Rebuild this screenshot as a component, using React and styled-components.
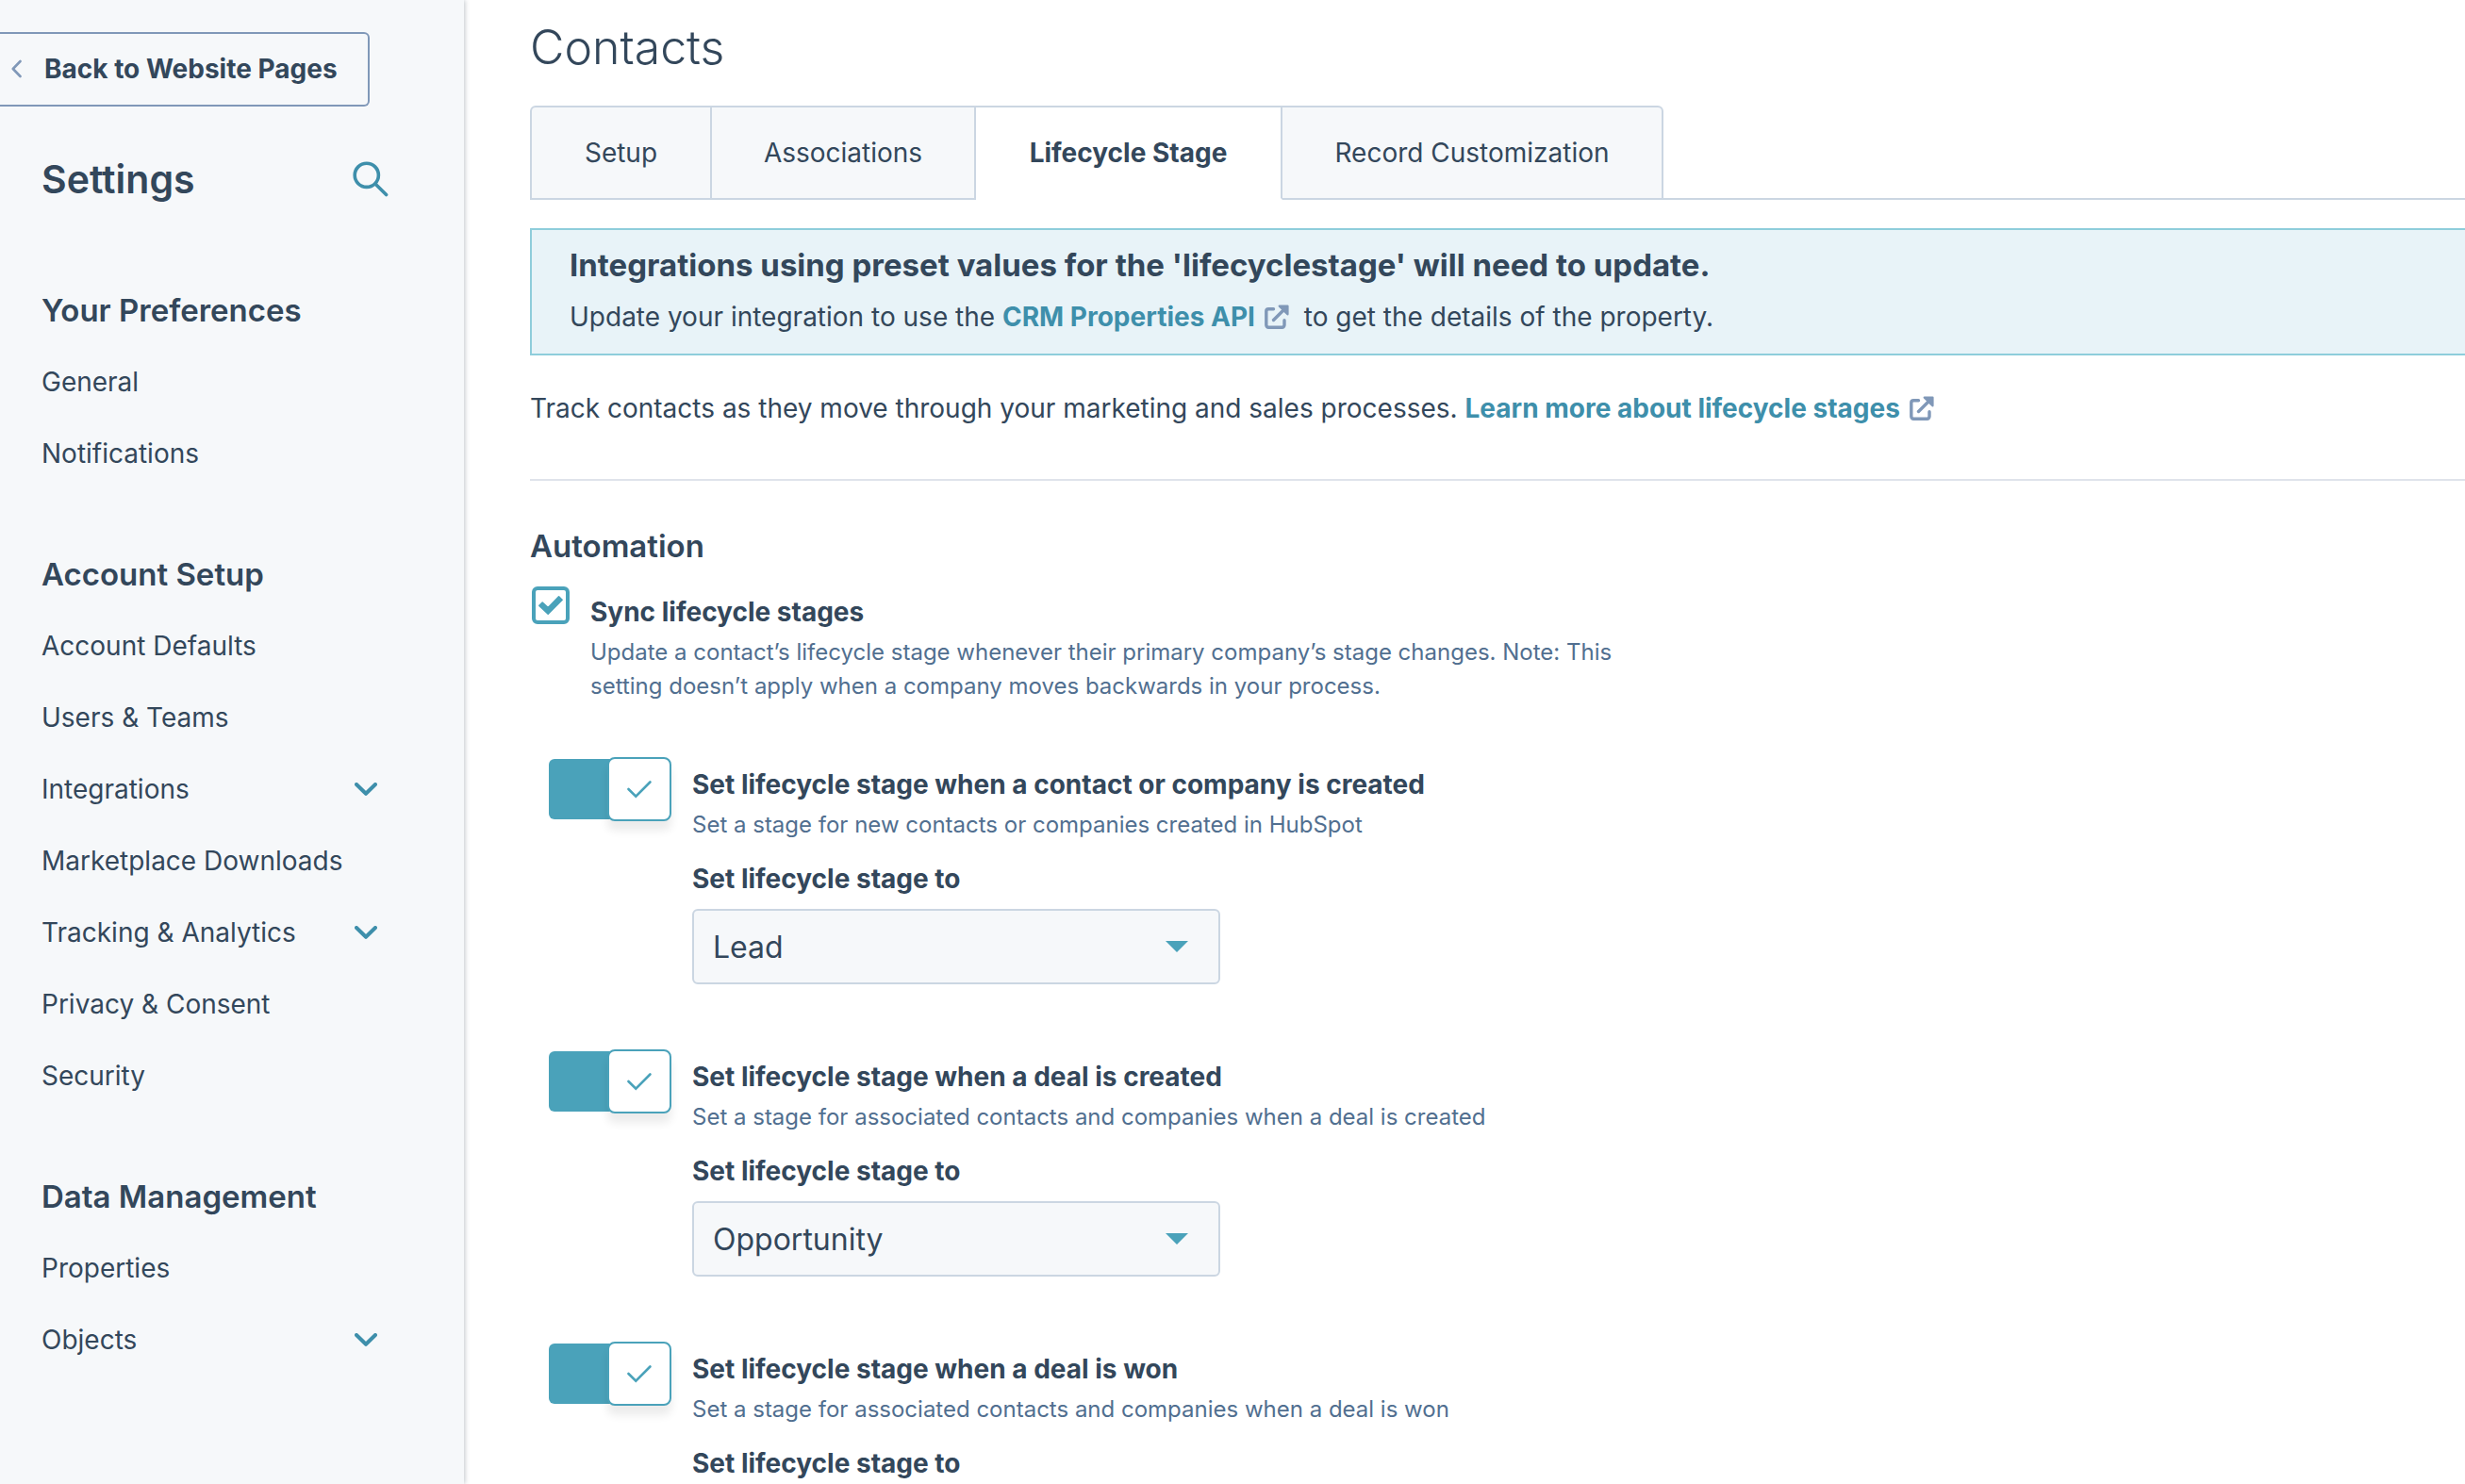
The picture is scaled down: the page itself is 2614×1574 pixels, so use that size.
import React, { useId, useState } from "react";
import styled, { createGlobalStyle } from "styled-components";

const colors = {
  text: "#33475b",
  muted: "#516f90",
  link: "#3e8fab",
  teal: "#4aa2ba",
  slate: "#8098b8",
  border: "#cbd6e2",
  divider: "#dfe3eb",
  surface: "#f6f8fa",
};

const GlobalStyle = createGlobalStyle`
  *, *::before, *::after {
    box-sizing: border-box;
  }

  body {
    margin: 0;
    background: #fff;
    color: ${colors.text};
    font-family: Inter, "Open Sans", sans-serif;
    font-size: 28px;
    line-height: 40px;
  }

  h1, h2, h3, p, ul {
    margin: 0;
    padding: 0;
  }

  button, input, select {
    margin: 0;
    font: inherit;
    color: inherit;
  }
`;

const Shell = styled.div`
  display: flex;
  height: 100vh;
`;

/* Sidebar */

const Sidebar = styled.aside`
  flex: none;
  width: 492px;
  padding-top: 34px;
  background: ${colors.surface};
  box-shadow: 1px 0 5px rgba(45, 62, 80, 0.3);
  overflow-y: auto;
  scrollbar-width: none;
`;

const BackButton = styled.button`
  display: flex;
  align-items: center;
  gap: 24px;
  width: 392px;
  height: 79px;
  padding: 0 20px 2px 12px;
  border: 2px solid ${colors.slate};
  border-left: 0;
  border-radius: 0 6px 6px 0;
  background: transparent;
  font-weight: 700;
  white-space: nowrap;
  cursor: pointer;

  svg {
    flex: none;
  }
`;

const SidebarHeader = styled.div`
  display: flex;
  align-items: center;
  justify-content: space-between;
  height: 60px;
  margin-top: 47px;
  padding: 0 80px 0 44px;
`;

const SidebarTitle = styled.h2`
  font-size: 41px;
  line-height: 60px;
  font-weight: 600;
`;

const IconButton = styled.button`
  display: flex;
  padding: 0;
  border: 0;
  background: none;
  cursor: pointer;
`;

const Nav = styled.nav`
  display: flex;
  flex-direction: column;
  gap: 52px;
  margin-top: 71px;
  padding: 0 92px 0 44px;
`;

const NavHeading = styled.h3`
  font-size: 33px;
  line-height: 76px;
  font-weight: 600;
`;

const NavList = styled.ul`
  list-style: none;
`;

const NavLink = styled.a`
  display: flex;
  align-items: center;
  justify-content: space-between;
  height: 76px;
  color: inherit;
  text-decoration: none;
  white-space: nowrap;
`;

/* Main */

const Main = styled.main`
  flex: 1;
  min-width: 0;
  padding: 20px 0 0 70px;
  overflow-y: auto;
  scrollbar-width: none;
`;

const PageTitle = styled.h1`
  font-size: 50px;
  line-height: 60px;
  font-weight: 300;
`;

const TabBar = styled.div`
  display: flex;
  height: 100px;
  margin-top: 32px;

  &::after {
    content: "";
    flex: 1;
    border-bottom: 2px solid ${colors.border};
  }
`;

const Tab = styled.button`
  width: ${({ $width }) => $width}px;
  padding: 0;
  border: 2px solid ${colors.border};
  border-left-width: 0;
  border-bottom-color: ${({ $active }) => ($active ? "#fff" : colors.border)};
  background: ${({ $active }) => ($active ? "#fff" : colors.surface)};
  font-weight: ${({ $active }) => ($active ? 700 : 400)};
  white-space: nowrap;
  cursor: pointer;

  &:first-child {
    border-left-width: 2px;
    border-top-left-radius: 6px;
  }

  &:last-child {
    border-top-right-radius: 6px;
  }
`;

const Alert = styled.section`
  margin-top: 30px;
  padding: 13px 40px 15px;
  border: 2px solid #8ecddb;
  border-right: 0;
  background: #e8f3f8;
  line-height: 48px;
`;

const AlertTitle = styled.h2`
  margin-bottom: 7px;
  font-size: 33px;
  font-weight: 700;
`;

const ExternalAnchor = styled.a`
  color: ${colors.link};
  font-weight: 700;
  text-decoration: none;

  svg {
    margin: 0 8px 0 10px;
    vertical-align: -3px;
  }
`;

const Intro = styled.p`
  margin-top: 32px;
  line-height: 48px;
`;

const Divider = styled.hr`
  height: 2px;
  margin: 51px 0 45px;
  border: 0;
  background: ${colors.divider};
`;

const SectionTitle = styled.h2`
  font-size: 33px;
  line-height: 48px;
  font-weight: 600;
`;

const SyncRow = styled.div`
  display: flex;
  gap: 22px;
  margin-top: 19px;
  padding-left: 2px;
`;

const SyncText = styled.div`
  max-width: 1100px;
  padding-top: 7px;
`;

const Label = styled.label`
  display: block;
  font-weight: 700;
`;

const Help = styled.p`
  margin-top: 5px;
  color: ${colors.muted};
  font-size: 24px;
  line-height: 36px;
`;

const Stack = styled.span`
  display: inline-grid;
  flex: none;
  align-self: flex-start;

  > * {
    grid-area: 1 / 1;
  }
`;

const CheckInput = styled.input`
  appearance: none;
  width: 40px;
  height: 40px;
  border: 4px solid ${colors.teal};
  border-radius: 6px;
  background: #fff;

  & + svg {
    place-self: center;
    pointer-events: none;
    visibility: hidden;
  }

  &:checked + svg {
    visibility: visible;
  }
`;

const Rules = styled.div`
  display: flex;
  flex-direction: column;
  gap: 69px;
  margin-top: 57px;
  padding: 0 20px 60px;
`;

const RuleRow = styled.div`
  display: flex;
  gap: 22px;
`;

const RuleBody = styled.div`
  padding-top: 9px;
`;

const SwitchInput = styled.input`
  appearance: none;
  width: 130px;
  height: 68px;
  cursor: pointer;
`;

const SwitchFace = styled.span`
  display: flex;
  align-items: center;
  flex-direction: ${({ $on }) => ($on ? "row" : "row-reverse")};
  pointer-events: none;
`;

const SwitchTrack = styled.span`
  flex: 1;
  height: 64px;
  border-radius: 6px;
  background: ${({ $on }) => ($on ? colors.teal : colors.border)};
`;

const SwitchKnob = styled.span`
  display: flex;
  align-items: center;
  justify-content: center;
  width: 68px;
  height: 68px;
  margin: 0 ${({ $on }) => ($on ? "0 0 -8px" : "-8px 0 0")};
  border: 2px solid ${colors.teal};
  border-radius: 8px;
  background: #fff;
  box-shadow: 0 10px 10px rgba(0, 0, 0, 0.08);
`;

const FieldLabel = styled(Label)`
  margin: 19px 0 12px;
`;

const Select = styled.select`
  appearance: none;
  width: 560px;
  height: 80px;
  padding: 2px 72px 0 20px;
  border: 2px solid ${colors.border};
  border-radius: 6px;
  background: ${colors.surface};
  font-size: 32px;
  cursor: pointer;

  & + svg {
    place-self: center end;
    margin-right: 34px;
    pointer-events: none;
  }
`;

/* Icons */

const ChevronLeft = () => (
  <svg width="11" height="20" viewBox="0 0 11 20" fill="none" stroke={colors.slate} strokeWidth="2.6" strokeLinecap="round" strokeLinejoin="round" aria-hidden="true">
    <path d="M9.5 2 1.8 10l7.7 8" />
  </svg>
);

const ChevronDown = () => (
  <svg width="24" height="14" viewBox="0 0 24 14" fill="none" stroke={colors.link} strokeWidth="4" strokeLinecap="round" strokeLinejoin="round" aria-hidden="true">
    <path d="m2 2 10 9.8L22 2" />
  </svg>
);

const SearchIcon = () => (
  <svg width="38" height="38" viewBox="0 0 38 38" fill="none" stroke={colors.link} strokeWidth="3.6" strokeLinecap="round" aria-hidden="true">
    <circle cx="14.8" cy="14.8" r="12.6" />
    <path d="m24.2 24.2 11.4 11.4" />
  </svg>
);

const ExternalIcon = () => (
  <svg width="26" height="26" viewBox="0 0 26 26" fill="none" stroke={colors.slate} strokeWidth="3.4" strokeLinecap="round" strokeLinejoin="round" aria-hidden="true">
    <path d="M9.5 4.7H4.2a2.4 2.4 0 0 0-2.4 2.4v14.7a2.4 2.4 0 0 0 2.4 2.4h14.4a2.4 2.4 0 0 0 2.4-2.4v-5" />
    <path d="M9.5 16.5 22 4" />
    <path d="M15.8 1.6h8.6v8.6l-2.6-2.6-3.4-3.4z" fill={colors.slate} strokeWidth="2.4" />
  </svg>
);

const BoldCheck = () => (
  <svg width="26" height="20" viewBox="0 0 26 20" fill={colors.teal} stroke={colors.teal} strokeWidth="1.6" strokeLinejoin="round" aria-hidden="true">
    <path d="M.9 10.3 4.2 7l6 5.6L21.6.9l3.5 3.4-14.9 14.8z" />
  </svg>
);

const ThinCheck = () => (
  <svg width="26" height="19" viewBox="0 0 26 19" fill="none" stroke={colors.teal} strokeWidth="2.6" strokeLinecap="round" aria-hidden="true">
    <path d="m1.5 9 7.8 7.6L24.4 1.5" />
  </svg>
);

const Caret = () => (
  <svg width="24" height="12" viewBox="0 0 24 12" fill={colors.teal} aria-hidden="true">
    <path d="M0 0h24L12 12z" />
  </svg>
);

/* Data */

const navSections = [
  {
    title: "Your Preferences",
    items: [{ label: "General" }, { label: "Notifications" }],
  },
  {
    title: "Account Setup",
    items: [
      { label: "Account Defaults" },
      { label: "Users & Teams" },
      { label: "Integrations", expandable: true },
      { label: "Marketplace Downloads" },
      { label: "Tracking & Analytics", expandable: true },
      { label: "Privacy & Consent" },
      { label: "Security" },
    ],
  },
  {
    title: "Data Management",
    items: [{ label: "Properties" }, { label: "Objects", expandable: true }],
  },
];

const tabs = [
  { label: "Setup", width: 193 },
  { label: "Associations", width: 280 },
  { label: "Lifecycle Stage", width: 325 },
  { label: "Record Customization", width: 404 },
];

const rules = [
  {
    title: "Set lifecycle stage when a contact or company is created",
    help: "Set a stage for new contacts or companies created in HubSpot",
    stage: "Lead",
  },
  {
    title: "Set lifecycle stage when a deal is created",
    help: "Set a stage for associated contacts and companies when a deal is created",
    stage: "Opportunity",
  },
  {
    title: "Set lifecycle stage when a deal is won",
    help: "Set a stage for associated contacts and companies when a deal is won",
    stage: "Customer",
  },
];

const stages = ["Lead", "Opportunity", "Customer"];

const ExternalLink = ({ children }) => (
  <ExternalAnchor href="#">
    {children}
    <ExternalIcon />
  </ExternalAnchor>
);

const Rule = ({ title, help, stage }) => {
  const id = useId();
  const [on, setOn] = useState(true);

  return (
    <RuleRow>
      <Stack>
        <SwitchInput
          id={`${id}-switch`}
          type="checkbox"
          role="switch"
          checked={on}
          onChange={(e) => setOn(e.target.checked)}
        />
        <SwitchFace $on={on}>
          <SwitchTrack $on={on} />
          <SwitchKnob $on={on}>{on && <ThinCheck />}</SwitchKnob>
        </SwitchFace>
      </Stack>
      <RuleBody>
        <Label htmlFor={`${id}-switch`}>{title}</Label>
        <Help>{help}</Help>
        <FieldLabel htmlFor={`${id}-stage`}>Set lifecycle stage to</FieldLabel>
        <Stack>
          <Select id={`${id}-stage`} defaultValue={stage}>
            {stages.map((name) => (
              <option key={name}>{name}</option>
            ))}
          </Select>
          <Caret />
        </Stack>
      </RuleBody>
    </RuleRow>
  );
};

const App = () => {
  const [activeTab, setActiveTab] = useState("Lifecycle Stage");

  return (
    <Shell>
      <GlobalStyle />
      <Sidebar>
        <BackButton type="button">
          <ChevronLeft />
          Back to Website Pages
        </BackButton>
        <SidebarHeader>
          <SidebarTitle>Settings</SidebarTitle>
          <IconButton type="button" aria-label="Search settings">
            <SearchIcon />
          </IconButton>
        </SidebarHeader>
        <Nav>
          {navSections.map((section) => (
            <div key={section.title}>
              <NavHeading>{section.title}</NavHeading>
              <NavList>
                {section.items.map((item) => (
                  <li key={item.label}>
                    <NavLink href="#">
                      {item.label}
                      {item.expandable && <ChevronDown />}
                    </NavLink>
                  </li>
                ))}
              </NavList>
            </div>
          ))}
        </Nav>
      </Sidebar>

      <Main>
        <PageTitle>Contacts</PageTitle>
        <TabBar role="tablist">
          {tabs.map((tab) => (
            <Tab
              key={tab.label}
              type="button"
              role="tab"
              aria-selected={activeTab === tab.label}
              $active={activeTab === tab.label}
              $width={tab.width}
              onClick={() => setActiveTab(tab.label)}
            >
              {tab.label}
            </Tab>
          ))}
        </TabBar>

        <Alert>
          <AlertTitle>
            Integrations using preset values for the 'lifecyclestage' will need to update.
          </AlertTitle>
          <p>
            Update your integration to use the <ExternalLink>CRM Properties API</ExternalLink> to
            get the details of the property.
          </p>
        </Alert>

        <Intro>
          Track contacts as they move through your marketing and sales processes.{" "}
          <ExternalLink>Learn more about lifecycle stages</ExternalLink>
        </Intro>
        <Divider />

        <SectionTitle>Automation</SectionTitle>
        <SyncRow>
          <Stack>
            <CheckInput id="sync-stages" type="checkbox" defaultChecked />
            <BoldCheck />
          </Stack>
          <SyncText>
            <Label htmlFor="sync-stages">Sync lifecycle stages</Label>
            <Help>
              Update a contact’s lifecycle stage whenever their primary company’s stage changes.
              Note: This setting doesn’t apply when a company moves backwards in your process.
            </Help>
          </SyncText>
        </SyncRow>

        <Rules>
          {rules.map((rule) => (
            <Rule key={rule.title} {...rule} />
          ))}
        </Rules>
      </Main>
    </Shell>
  );
};

export default App;
